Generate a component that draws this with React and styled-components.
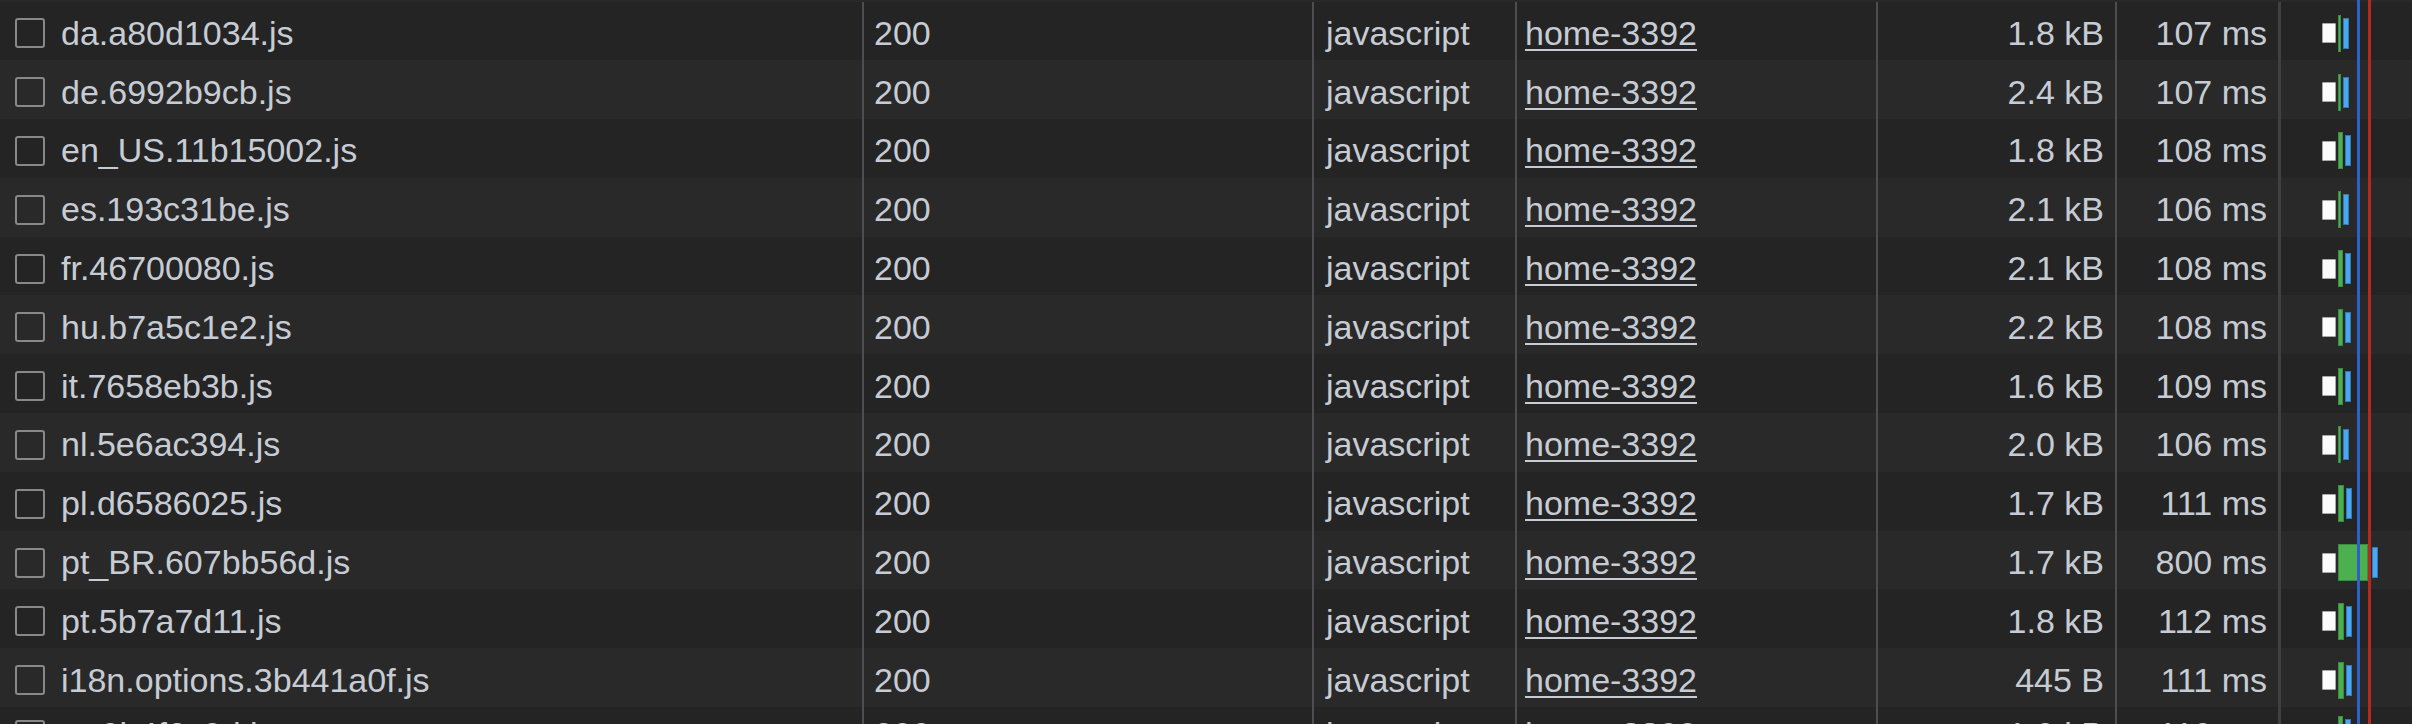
import React from 'react';
import styled, { createGlobalStyle } from 'styled-components';

const GlobalStyle = createGlobalStyle`
  html, body {
    margin: 0;
    padding: 0;
    height: 724px;
    overflow: hidden;
    background: #242424;
  }
  * {
    box-sizing: border-box;
  }
`;

const Table = styled.div`
  position: relative;
  width: 2412px;
  font-family: "Liberation Sans", Arial, Helvetica, sans-serif;
  font-size: 34px;
  color: #c7ccd4;
`;

const TopEdge = styled.div`
  height: 1.5px;
  background: #292929;
`;

const Row = styled.div`
  display: grid;
  grid-template-columns: 864px 450px 203px 361px 239px 164px 131px;
  height: ${(p) => (p.$tail ? '50px' : '58.8px')};
  background: ${(p) => (p.$alt ? '#292929' : '#242424')};
  white-space: nowrap;
`;

const Cell = styled.div`
  display: flex;
  align-items: center;
  padding-top: 5px;
  overflow: hidden;
  border-right: 2px solid #4d4d52;
`;

const NameCell = styled(Cell)`
  padding-left: 15px;
  gap: 16px;
`;

const Checkbox = styled.span`
  flex: none;
  width: 30px;
  height: 30px;
  border: 2.6px solid #888888;
  border-radius: 3px;
`;

const StatusCell = styled(Cell)`
  padding-left: 10px;
`;

const TypeCell = styled(Cell)`
  padding-left: 12px;
`;

const InitiatorCell = styled(Cell)`
  padding-left: 8px;
`;

const Link = styled.span`
  text-decoration: underline;
  text-decoration-thickness: 2px;
  text-underline-offset: 4px;
`;

const NumberCell = styled(Cell)`
  justify-content: flex-end;
  padding-right: 11px;
`;

const TimeCell = styled(NumberCell)`
  border-right: 3px solid #404040;
`;

const WaterfallCell = styled(Cell)`
  border-right: none;
  padding-left: 41px;
  gap: 2px;
`;

const Queue = styled.span`
  flex: none;
  width: 14px;
  height: 20px;
  background: #fbfbfb;
  border: 1.5px solid #a8a8a8;
  border-radius: 1px;
`;

const Waiting = styled.span`
  flex: none;
  height: 37px;
  background: #4caf50;
  border: 1px solid #3b8c3e;
`;

const Download = styled.span`
  flex: none;
  width: 6px;
  height: 31px;
  margin-left: ${(p) => p.$gap || 0}px;
  background: #4aa8f2;
  border: 1px solid #3479b4;
`;

const Marker = styled.div`
  position: absolute;
  top: 0;
  bottom: 0;
  left: ${(p) => p.$left}px;
  width: 3px;
  background: ${(p) => p.$color};
`;

const rows = [
  { name: 'da.a80d1034.js', size: '1.8 kB', time: '107 ms', wait: 3.4 },
  { name: 'de.6992b9cb.js', size: '2.4 kB', time: '107 ms', wait: 3.4 },
  { name: 'en_US.11b15002.js', size: '1.8 kB', time: '108 ms', wait: 4.5 },
  { name: 'es.193c31be.js', size: '2.1 kB', time: '106 ms', wait: 3.4 },
  { name: 'fr.46700080.js', size: '2.1 kB', time: '108 ms', wait: 4.5 },
  { name: 'hu.b7a5c1e2.js', size: '2.2 kB', time: '108 ms', wait: 4.5 },
  { name: 'it.7658eb3b.js', size: '1.6 kB', time: '109 ms', wait: 4.5 },
  { name: 'nl.5e6ac394.js', size: '2.0 kB', time: '106 ms', wait: 3.4 },
  { name: 'pl.d6586025.js', size: '1.7 kB', time: '111 ms', wait: 6 },
  { name: 'pt_BR.607bb56d.js', size: '1.7 kB', time: '800 ms', wait: 30, gap: 2.4 },
  { name: 'pt.5b7a7d11.js', size: '1.8 kB', time: '112 ms', wait: 6 },
  { name: 'i18n.options.3b441a0f.js', size: '445 B', time: '111 ms', wait: 6 },
  { name: 'ru.0b4f6c2d.js', size: '1.9 kB', time: '110 ms', wait: 5, tail: true },
];

function RequestRow({ row, alt }) {
  return (
    <Row $alt={alt} $tail={row.tail}>
      <NameCell>
        <Checkbox />
        <span>{row.name}</span>
      </NameCell>
      <StatusCell>200</StatusCell>
      <TypeCell>javascript</TypeCell>
      <InitiatorCell>
        <Link>home-3392</Link>
      </InitiatorCell>
      <NumberCell>{row.size}</NumberCell>
      <TimeCell>{row.time}</TimeCell>
      <WaterfallCell>
        <Queue />
        <Waiting style={{ width: row.wait }} />
        <Download $gap={row.gap} />
      </WaterfallCell>
    </Row>
  );
}

export default function App() {
  return (
    <>
      <GlobalStyle />
      <Table>
        <TopEdge />
        {rows.map((row, i) => (
          <RequestRow key={row.name} row={row} alt={i % 2 === 1} />
        ))}
        <Marker $left={2357} $color="#2c62c6" />
        <Marker $left={2367.5} $color="#b52a20" />
      </Table>
    </>
  );
}
